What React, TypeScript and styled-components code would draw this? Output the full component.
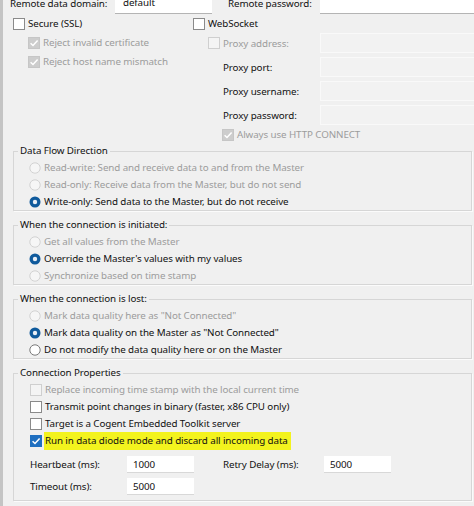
import React from "react";
import styled, { createGlobalStyle, css } from "styled-components";

const GlobalStyle = createGlobalStyle`
  html, body { margin: 0; padding: 0; background: #f0f0f0; }
  * { box-sizing: border-box; }
`;

const FONT = `"Noto Sans", "Open Sans", sans-serif`;

const Window = styled.div`
  width: 474px;
  height: 506px;
  overflow: hidden;
  background: #f0f0f0;
  border-left: 3px solid #c4c4c4;
  font-family: ${FONT};
  font-size: 9.8px;
  letter-spacing: -0.1px;
  color: #111;
`;

const TopRow = styled.div`
  display: flex;
  align-items: flex-end;
  height: 14px;
  overflow: hidden;
`;

const TopLabel = styled.span<{ $width: number; $indent: number }>`
  width: ${(p) => p.$width}px;
  margin-left: ${(p) => p.$indent}px;
  height: 21px;
  line-height: 21px;
  white-space: nowrap;
  flex: none;
`;

const TopInput = styled.div<{ $width?: number }>`
  height: 22px;
  background: #fff;
  border-bottom: 1px solid #b4b4b4;
  line-height: 21px;
  padding-left: 8px;
  flex: ${(p) => (p.$width ? "none" : "1")};
  width: ${(p) => (p.$width ? `${p.$width}px` : "auto")};
`;

const Options = styled.div`
  display: grid;
  grid-template-columns: 180px 1fr;
  padding-left: 10px;
`;

const Column = styled.div`
  display: flex;
  flex-direction: column;
`;

const CheckRow = styled.label<{ $indent?: number; $disabled?: boolean }>`
  display: flex;
  align-items: center;
  gap: 3px;
  height: 19px;
  padding-left: ${(p) => p.$indent ?? 0}px;
  white-space: nowrap;
  color: ${(p) => (p.$disabled ? "#9c9c9c" : "#111")};
`;

type BoxState = "off" | "on" | "disabledOn" | "disabledOff";

const BoxFrame = styled.span<{ $state: BoxState }>`
  width: 12px;
  height: 12px;
  flex: none;
  display: inline-flex;
  align-items: center;
  justify-content: center;
  border: 1px solid;
  ${(p) =>
    p.$state === "off"
      ? css`background: #fff; border-color: #8a8a8a;`
      : p.$state === "on"
      ? css`background: #1f6fc0; border-color: #1f6fc0;`
      : p.$state === "disabledOn"
      ? css`background: #cdcdcd; border-color: #c6c6c6;`
      : css`background: #f4f4f4; border-color: #cfcfcf;`}
`;

const CheckBox = ({ state }: { state: BoxState }) => (
  <BoxFrame $state={state}>
    {(state === "on" || state === "disabledOn") && (
      <svg width="10" height="10" viewBox="0 0 10 10">
        <path d="M1.6 5.2 L4 7.5 L8.6 2.4" fill="none" stroke="#fff" strokeWidth="1.5" />
      </svg>
    )}
  </BoxFrame>
);

type RadioState = "off" | "on" | "disabledOff";

const RadioFrame = styled.span`
  width: 12px;
  height: 12px;
  flex: none;
  display: inline-flex;
`;

const Radio = ({ state }: { state: RadioState }) => (
  <RadioFrame>
    <svg width="12" height="12" viewBox="0 0 12 12">
      {state === "on" ? (
        <>
          <circle cx="6" cy="6" r="5.5" fill="#0f5a9c" />
          <circle cx="6" cy="6" r="2.2" fill="#e8eef5" />
        </>
      ) : state === "off" ? (
        <circle cx="6" cy="6" r="5.2" fill="#fff" stroke="#7a7a7a" strokeWidth="1" />
      ) : (
        <circle cx="6" cy="6" r="5.2" fill="#f6f6f6" stroke="#d2d2d2" strokeWidth="1" />
      )}
    </svg>
  </RadioFrame>
);

const ProxyGrid = styled.div`
  display: grid;
  grid-template-columns: 112px 1fr;
  grid-auto-rows: 20px;
  row-gap: 4px;
  margin-left: 15px;
  align-items: center;
`;

const ProxyLabel = styled.span`
  padding-left: 15px;
  white-space: nowrap;
`;

const ProxyInput = styled.div`
  height: 20px;
  background: #f2f2f2;
  border: 1px solid #f9f9f9;
  border-right: none;
`;

const Groups = styled.div`
  display: flex;
  flex-direction: column;
  gap: 6px;
  margin: -1px 2px 0 10px;
`;

const Group = styled.fieldset`
  margin: 0;
  padding: 0;
  border: 1px solid #d6d6d6;
  box-shadow: 1px 1px 0 #fbfbfb;
  min-width: 0;
`;

const Legend = styled.legend`
  margin-left: 4px;
  padding: 0 2px;
  line-height: 16px;
  height: 16px;
  color: #111;
`;

const ItemList = styled.div<{ $indent: number; $bottom?: number }>`
  display: flex;
  flex-direction: column;
  padding-left: ${(p) => p.$indent}px;
  padding-bottom: ${(p) => p.$bottom ?? 0}px;
`;

const Item = styled.div<{ $disabled?: boolean }>`
  display: flex;
  align-items: center;
  gap: 3px;
  height: 17px;
  white-space: nowrap;
  color: ${(p) => (p.$disabled ? "#9c9c9c" : "#111")};
`;

const Highlight = styled.span`
  display: inline-flex;
  align-items: center;
  height: 18px;
  padding: 0 3px 0 1px;
  margin-left: -1px;
  background: #f3f31e;
`;

const FieldGrid = styled.div`
  display: grid;
  grid-template-columns: 97px 96px 101px 68px;
  grid-auto-rows: 17px;
  row-gap: 5px;
  margin-top: 7px;
  align-items: center;
`;

const FieldLabel = styled.span`
  white-space: nowrap;
`;

const FieldInput = styled.div`
  width: 67px;
  height: 17px;
  line-height: 17px;
  background: #fff;
  border-bottom: 1px solid #d8d8d8;
  padding-left: 6px;
`;

const dataFlow: { text: string; state: RadioState }[] = [
  { text: "Read-write: Send and receive data to and from the Master", state: "disabledOff" },
  { text: "Read-only: Receive data from the Master, but do not send", state: "disabledOff" },
  { text: "Write-only: Send data to the Master, but do not receive", state: "on" },
];

const initiated: { text: string; state: RadioState }[] = [
  { text: "Get all values from the Master", state: "disabledOff" },
  { text: "Override the Master's values with my values", state: "on" },
  { text: "Synchronize based on time stamp", state: "disabledOff" },
];

const lost: { text: string; state: RadioState }[] = [
  { text: "Mark data quality here as \"Not Connected\"", state: "disabledOff" },
  { text: "Mark data quality on the Master as \"Not Connected\"", state: "on" },
  { text: "Do not modify the data quality here or on the Master", state: "off" },
];

const RadioGroup = ({ title, items }: { title: string; items: { text: string; state: RadioState }[] }) => (
  <Group>
    <Legend>{title}</Legend>
    <ItemList $indent={15}>
      {items.map((it) => (
        <Item key={it.text} $disabled={it.state === "disabledOff"}>
          <Radio state={it.state} />
          <span>{it.text}</span>
        </Item>
      ))}
    </ItemList>
  </Group>
);

export default function App() {
  return (
    <>
      <GlobalStyle />
      <Window>
        <TopRow>
          <TopLabel $width={105} $indent={7}>Remote data domain:</TopLabel>
          <TopInput $width={97}>default</TopInput>
          <TopLabel $width={92} $indent={16}>Remote password:</TopLabel>
          <TopInput />
        </TopRow>

        <Options>
          <Column>
            <CheckRow>
              <CheckBox state="off" />
              <span>Secure (SSL)</span>
            </CheckRow>
            <CheckRow $indent={15} $disabled>
              <CheckBox state="disabledOn" />
              <span>Reject invalid certificate</span>
            </CheckRow>
            <CheckRow $indent={15} $disabled>
              <CheckBox state="disabledOn" />
              <span>Reject host name mismatch</span>
            </CheckRow>
          </Column>
          <Column>
            <CheckRow>
              <CheckBox state="off" />
              <span>WebSocket</span>
            </CheckRow>
            <ProxyGrid>
              <CheckRow $disabled>
                <CheckBox state="disabledOff" />
                <span>Proxy address:</span>
              </CheckRow>
              <ProxyInput />
              <ProxyLabel>Proxy port:</ProxyLabel>
              <ProxyInput />
              <ProxyLabel>Proxy username:</ProxyLabel>
              <ProxyInput />
              <ProxyLabel>Proxy password:</ProxyLabel>
              <ProxyInput />
            </ProxyGrid>
            <CheckRow $indent={29} $disabled>
              <CheckBox state="disabledOn" />
              <span>Always use HTTP CONNECT</span>
            </CheckRow>
          </Column>
        </Options>

        <Groups>
          <RadioGroup title="Data Flow Direction" items={dataFlow} />
          <RadioGroup title="When the connection is initiated:" items={initiated} />
          <RadioGroup title="When the connection is lost:" items={lost} />
          <Group>
            <Legend>Connection Properties</Legend>
            <ItemList $indent={16} $bottom={5}>
              <Item $disabled>
                <CheckBox state="disabledOff" />
                <span>Replace incoming time stamp with the local current time</span>
              </Item>
              <Item>
                <CheckBox state="off" />
                <span>Transmit point changes in binary (faster, x86 CPU only)</span>
              </Item>
              <Item>
                <CheckBox state="off" />
                <span>Target is a Cogent Embedded Toolkit server</span>
              </Item>
              <Item>
                <CheckBox state="on" />
                <Highlight>Run in data diode mode and discard all incoming data</Highlight>
              </Item>
              <FieldGrid>
                <FieldLabel>Heartbeat (ms):</FieldLabel>
                <FieldInput>1000</FieldInput>
                <FieldLabel>Retry Delay (ms):</FieldLabel>
                <FieldInput>5000</FieldInput>
                <FieldLabel>Timeout (ms):</FieldLabel>
                <FieldInput>5000</FieldInput>
              </FieldGrid>
            </ItemList>
          </Group>
        </Groups>
      </Window>
    </>
  );
}
